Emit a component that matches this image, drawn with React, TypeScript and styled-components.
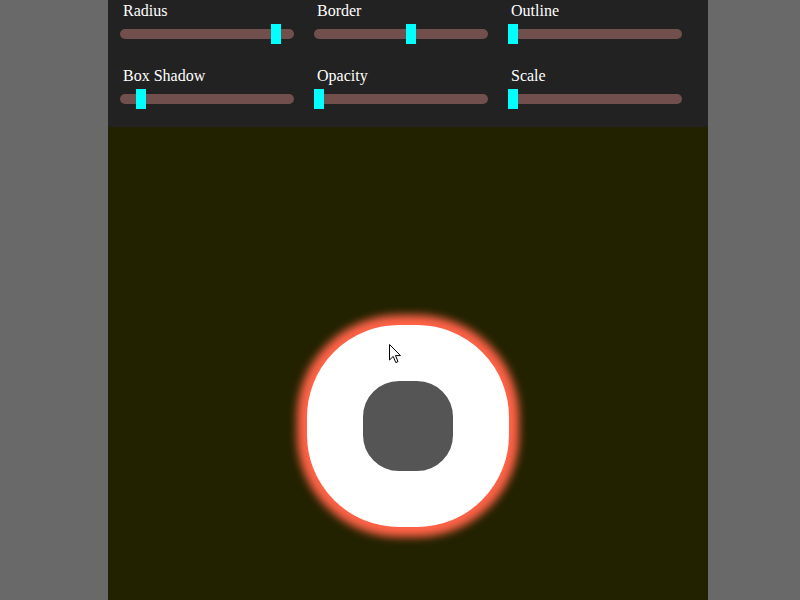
import * as React from "react";
import styled, { createGlobalStyle } from "styled-components";

const GlobalStyles = createGlobalStyle`
  html, body {
    margin: 0;
    padding: 0;
    overflow: hidden;
    background: dimgray;
  }
  *, *:before, *:after {
    box-sizing: border-box;
  }
  body {
    font-family: "Liberation Serif", "Times New Roman", serif;
    font-size: 16px;
    color: #fff;
  }
`;

const Page = styled.main`
  width: 600px;
  margin-left: 108px;
`;

const Controls = styled.section`
  display: grid;
  grid-template-columns: repeat(3, 174px);
  column-gap: 20px;
  row-gap: 23px;
  padding: 2px 12px 18px;
  background: #222;
`;

const Control = styled.label`
  display: flex;
  flex-direction: column;
  gap: 4px;
`;

const Name = styled.span`
  display: block;
  font-family: "Liberation Serif", "Times New Roman", serif;
  font-size: 16px;
  line-height: 18px;
  padding-left: 3px;
`;

const Range = styled.input.attrs({ type: "range", min: 0, max: 100 })`
  -webkit-appearance: none;
  appearance: none;
  display: block;
  width: 174px;
  height: 20px;
  margin: 0;
  background: transparent;

  &::-webkit-slider-runnable-track {
    height: 10px;
    border-radius: 5px;
    background: #714f4c;
  }
  &::-webkit-slider-thumb {
    -webkit-appearance: none;
    width: 10px;
    height: 20px;
    margin-top: -5px;
    border: none;
    border-radius: 0;
    background: cyan;
  }
  &::-moz-range-track {
    height: 10px;
    border-radius: 5px;
    background: #714f4c;
  }
  &::-moz-range-thumb {
    width: 10px;
    height: 20px;
    border: none;
    border-radius: 0;
    background: cyan;
  }
`;

const Stage = styled.section`
  position: relative;
  height: 598px;
  display: flex;
  align-items: center;
  justify-content: center;
  background: #222200;
`;

const Shape = styled.div<{ $radius: number; $border: number; $shadow: number }>`
  box-sizing: content-box;
  flex: none;
  width: 90px;
  height: 90px;
  background: #555;
  border: ${(p) => p.$border}px solid #fff;
  border-radius: ${(p) => p.$radius}px;
  box-shadow: 0 0 8px ${(p) => p.$shadow}px tomato;
`;

// mouse pointer caught in the screenshot
const Pointer = styled.svg`
  position: absolute;
  left: 281px;
  top: 217px;
  pointer-events: none;
`;

const controls = [
  { key: "radius", label: "Radius", value: 92 },
  { key: "border", label: "Border", value: 56 },
  { key: "outline", label: "Outline", value: 0 },
  { key: "shadow", label: "Box Shadow", value: 10 },
  { key: "opacity", label: "Opacity", value: 0 },
  { key: "scale", label: "Scale", value: 0 },
];

const App = () => {
  const [values, setValues] = React.useState<Record<string, number>>(() =>
    Object.fromEntries(controls.map((c) => [c.key, c.value]))
  );

  return (
    <>
      <GlobalStyles />
      <Page>
        <Controls>
          {controls.map(({ key, label }) => (
            <Control key={key}>
              <Name>{label}</Name>
              <Range
                value={values[key]}
                onChange={(e) =>
                  setValues({ ...values, [key]: Number(e.target.value) })
                }
              />
            </Control>
          ))}
        </Controls>
        <Stage>
          <Shape
            $radius={values.radius}
            $border={values.border}
            $shadow={values.shadow}
          />
          <Pointer width="13" height="20" viewBox="0 0 13 20">
            <path
              d="M0.5 0.5 L0.5 16 L4.2 12.4 L6.8 18.6 L9 17.6 L6.5 11.6 L11.5 11.6 Z"
              fill="#fff"
              stroke="#000"
              strokeWidth="1"
              strokeLinejoin="round"
            />
          </Pointer>
        </Stage>
      </Page>
    </>
  );
};

export default App;
